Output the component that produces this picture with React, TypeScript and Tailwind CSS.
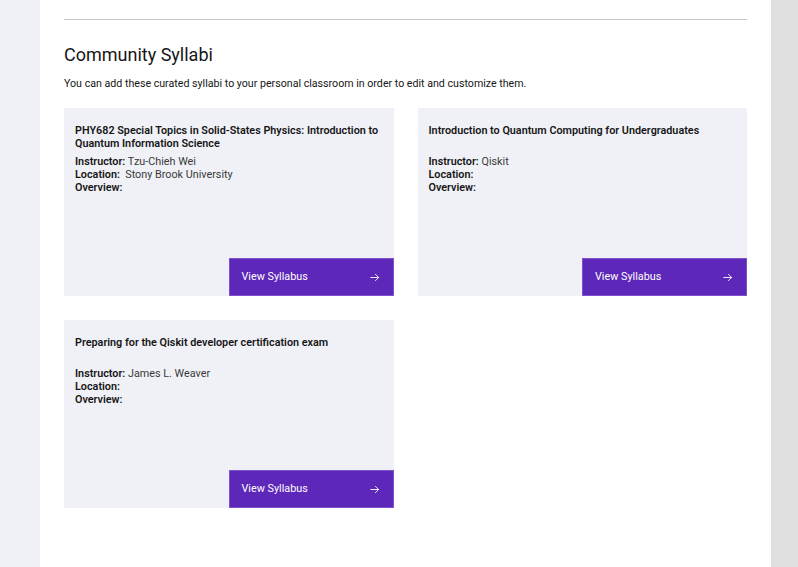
import React from 'react';

const syllabi = [
  {
    title: 'PHY682 Special Topics in Solid-States Physics: Introduction to Quantum Information Science',
    instructor: 'Tzu-Chieh Wei',
    location: ' Stony Brook University',
  },
  {
    title: 'Introduction to Quantum Computing for Undergraduates',
    instructor: 'Qiskit',
    location: '',
  },
  {
    title: 'Preparing for the Qiskit developer certification exam',
    instructor: 'James L. Weaver',
    location: '',
  },
];

const ArrowRight = () => (
  <svg width="11" height="11" viewBox="0 0 16 16" fill="none" stroke="currentColor" strokeWidth="1.3">
    <path d="M2 8h12M9 3l5 5-5 5" />
  </svg>
);

const SyllabusCard = ({ title, instructor, location }: { title: string; instructor: string; location: string }) => (
  <div className="flex flex-col h-[188px] bg-[#f0f1f6]">
    <div className="pt-[16px] px-[11px] text-[10.8px] leading-[13px] text-[#161616]">
      <h3 className="font-semibold min-h-[26px] mb-[5px]">{title}</h3>
      <p>
        <span className="font-semibold">Instructor:</span> <span className="text-[#393939]">{instructor}</span>
      </p>
      <p>
        <span className="font-semibold">Location:</span>
        <span className="text-[#393939] whitespace-pre">{location ? ' ' + location : ''}</span>
      </p>
      <p>
        <span className="font-semibold">Overview:</span>
      </p>
    </div>
    <a
      href="#"
      className="mt-auto self-end w-[165px] h-[38px] flex items-center justify-between pl-[12px] pr-[13px] bg-[#5d27b9] border border-[#7d52cc] text-white text-[10.8px]"
    >
      <span>View Syllabus</span>
      <ArrowRight />
    </a>
  </div>
);

export default function App() {
  return (
    <div className="flex w-full h-[567px] overflow-hidden" style={{ fontFamily: 'Roboto, sans-serif' }}>
      <div className="w-[40px] shrink-0 bg-[#f0f1f6]" />
      <main className="w-[731px] shrink-0 bg-white px-[24px] pt-[19px]">
        <div className="h-px bg-[#c6c6c6]" />
        <h2 className="mt-[23px] text-[18px] leading-[24px] text-[#161616]">Community Syllabi</h2>
        <p className="mt-[10px] text-[10.65px] leading-[14px] text-[#161616]">
          You can add these curated syllabi to your personal classroom in order to edit and customize them.
        </p>
        <div className="mt-[17px] grid grid-cols-2 gap-[24px]">
          {syllabi.map((s) => (
            <SyllabusCard key={s.title} {...s} />
          ))}
        </div>
      </main>
      <div className="flex-1 bg-[#e0e0e0]" />
    </div>
  );
}
